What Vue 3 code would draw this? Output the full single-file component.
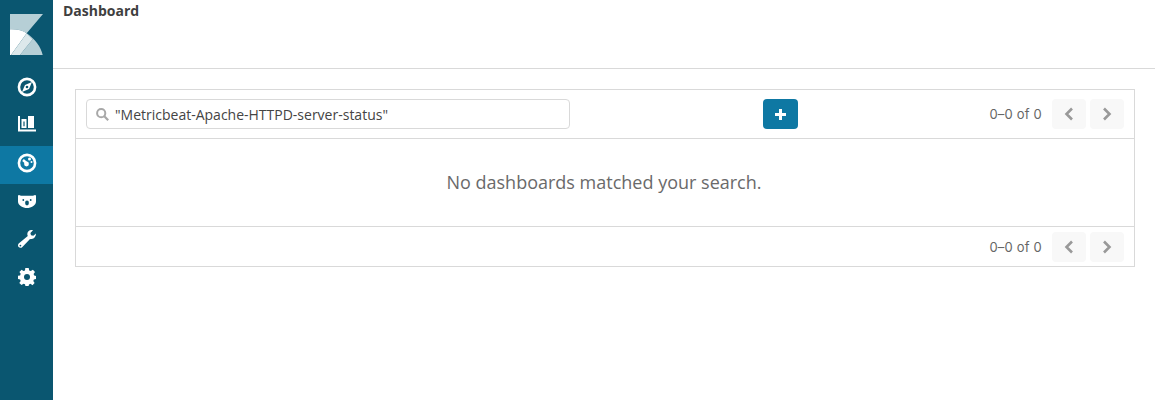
<script setup>
const navItems = [
  { name: "discover", active: false },
  { name: "visualize", active: false },
  { name: "dashboard", active: true },
  { name: "timelion", active: false },
  { name: "devtools", active: false },
  { name: "management", active: false },
];
</script>

<template>
  <div class="app">
    <nav class="sidebar">
      <div class="logo">
        <svg width="33" height="42" viewBox="0 0 33 42">
          <path d="M0 0H33L16.700 19.300C13 16.500 7 15 0 15.300Z" fill="#b6cfd6" />
          <path d="M0 15.300C7 15 13 16.500 16.700 19.300L1 41H0Z" fill="#fff" />
          <path d="M16.700 19.300C25 25 31 33 32.700 41H10L22.700 25.300Z" fill="#b6cfd6" />
          <path d="M16.700 19.300L22.700 25.300L10 41H1Z" fill="#dce8eb" />
        </svg>
      </div>
      <a v-for="item in navItems" :key="item.name" class="nav-item" :class="{ active: item.active }">
        <svg v-if="item.name === 'discover'" width="18" height="18" viewBox="0 0 18 18">
          <circle cx="9" cy="9" r="8.100" fill="none" stroke="#fff" stroke-width="2.600" />
          <path d="M14 4L11 11L4 14L7 7Z" fill="#fff" />
          <circle cx="9" cy="9" r="1.300" fill="#0a5670" />
        </svg>
        <svg v-else-if="item.name === 'visualize'" width="18" height="18" viewBox="0 0 18 18">
          <path d="M0 0H2V13.500H18V15.500H0Z" fill="#fff" />
          <path d="M3.500 3H8.500V12H3.500ZM5.400 5.500V10.300H6.600V5.500Z" fill="#fff" fill-rule="evenodd" />
          <rect x="10" y="0" width="6" height="12" fill="#fff" />
        </svg>
        <svg v-else-if="item.name === 'dashboard'" width="18" height="18" viewBox="0 0 18 18">
          <circle cx="9" cy="9" r="8.100" fill="none" stroke="#fff" stroke-width="2.600" />
          <path d="M5 6L9 9.500" stroke="#fff" stroke-width="2.400" />
          <circle cx="8.500" cy="10" r="2.400" fill="#fff" />
          <circle cx="11.500" cy="5" r="1.500" fill="#fff" />
          <circle cx="13.500" cy="8" r="1" fill="#fff" />
        </svg>
        <svg v-else-if="item.name === 'timelion'" width="18" height="18" viewBox="0 0 18 18">
          <path
            d="M0 4Q0 3 1 3L3 3.800H15L17 3Q18 3 18 4V9.500C18 13.500 13 16 9 16C5 16 0 13.500 0 9.500Z"
            fill="#fff"
          />
          <circle cx="5.300" cy="8" r="0.900" fill="#0a5670" />
          <circle cx="12.700" cy="8" r="0.900" fill="#0a5670" />
          <ellipse cx="9" cy="11" rx="1.900" ry="2.400" fill="#0a5670" />
        </svg>
        <svg v-else-if="item.name === 'devtools'" width="18" height="18" viewBox="0 0 18 18">
          <path
            d="M13.500 0C11 0 9.300 2 9.300 4C9.300 4.800 9.500 5.500 9.800 6L0.700 13.500C-0.300 14.600 -0.100 16.200 0.600 17C1.500 18 3.300 18.200 4.400 17L12 9C12.600 9.200 13 9.200 13.600 9.100C16.300 8.800 18 6.300 18 3.500L15.300 5.800L13 5.200L12.400 3L15 0.300C14.500 0.100 14 0 13.500 0Z"
            fill="#fff"
          />
          <circle cx="2.400" cy="15.600" r="0.900" fill="#0a5670" />
        </svg>
        <svg v-else width="18" height="18" viewBox="0 0 18 18">
          <path
            d="M7.300 0H10.700L11.200 2.400L12.800 3L14.900 1.700L17 4L15.600 6L16.200 7.500L18 8V11L15.900 11.500L15.300 13L16.600 15L14.500 17.200L12.500 15.800L11 16.400L10.600 18H7.400L7 16.300L5.500 15.700L3.500 17L1.300 14.900L2.700 13L2.100 11.400L0 11V7.800L2.100 7.400L2.700 5.800L1.400 3.900L3.600 1.700L5.500 3L7 2.400Z"
            fill="#fff"
          />
          <circle cx="9" cy="9" r="3" fill="#0a5670" />
        </svg>
      </a>
    </nav>

    <main class="main">
      <header class="topbar">
        <h1 class="title">Dashboard</h1>
      </header>

      <div class="content">
        <section class="panel">
          <div class="toolbar">
            <div class="search">
              <svg width="13" height="13" viewBox="0 0 13 13">
                <circle cx="5.200" cy="5.200" r="4.100" fill="none" stroke="#a8a8a8" stroke-width="2" />
                <path d="M8.300 8.300L12.200 12.200" stroke="#a8a8a8" stroke-width="2.200" />
              </svg>
              <span class="query">"Metricbeat-Apache-HTTPD-server-status"</span>
            </div>
            <div class="add-slot">
              <button class="add-btn">
                <svg width="11" height="11" viewBox="0 0 11 11">
                  <path d="M4 0H7V4H11V7H7V11H4V7H0V4H4Z" fill="#fff" />
                </svg>
              </button>
            </div>
            <div class="pager">
              <span class="count">0–0 of 0</span>
              <button class="page-btn">
                <svg width="10" height="14" viewBox="0 0 10 14">
                  <path d="M8 1.500L2.500 7L8 12.500" fill="none" stroke="#999" stroke-width="2.600" />
                </svg>
              </button>
              <button class="page-btn">
                <svg width="10" height="14" viewBox="0 0 10 14">
                  <path d="M2 1.500L7.500 7L2 12.500" fill="none" stroke="#999" stroke-width="2.600" />
                </svg>
              </button>
            </div>
          </div>

          <div class="empty">No dashboards matched your search.</div>

          <div class="footer">
            <div class="pager">
              <span class="count">0–0 of 0</span>
              <button class="page-btn">
                <svg width="10" height="14" viewBox="0 0 10 14">
                  <path d="M8 1.500L2.500 7L8 12.500" fill="none" stroke="#999" stroke-width="2.600" />
                </svg>
              </button>
              <button class="page-btn">
                <svg width="10" height="14" viewBox="0 0 10 14">
                  <path d="M2 1.500L7.500 7L2 12.500" fill="none" stroke="#999" stroke-width="2.600" />
                </svg>
              </button>
            </div>
          </div>
        </section>
      </div>
    </main>
  </div>
</template>

<style>
html,
body {
  margin: 0;
  background: #fff;
}
</style>

<style scoped>
* {
  box-sizing: border-box;
}

.app {
  display: flex;
  height: 400px;
  overflow: hidden;
  font-family: "Open Sans", sans-serif;
  color: #3f3f3f;
}

.sidebar {
  width: 53px;
  flex: none;
  background: #0a5670;
}

.logo {
  height: 70px;
  padding: 14px 0 0 10px;
}

.logo svg,
.nav-item svg,
.search svg,
.add-btn svg,
.page-btn svg {
  display: block;
}

.nav-item svg {
  overflow: visible;
}

.nav-item {
  display: flex;
  justify-content: center;
  height: 38px;
  padding-top: 8px;
}

.nav-item.active {
  background: #0e78a3;
}

.main {
  flex: 1;
  min-width: 0;
}

.topbar {
  height: 69px;
  padding-left: 10px;
  border-bottom: 1px solid #d9d9d9;
}

.title {
  margin: 0;
  font-size: 14px;
  font-weight: 700;
  line-height: 21px;
  color: #3f3f3f;
}

.content {
  padding: 20px 20px 0 22px;
}

.panel {
  border: 1px solid #d9d9d9;
}

.toolbar {
  display: flex;
  align-items: center;
  height: 49px;
  padding: 0 10px;
  border-bottom: 1px solid #d9d9d9;
}

.search {
  display: flex;
  align-items: center;
  gap: 6px;
  width: 484px;
  height: 30px;
  padding-left: 9px;
  border: 1px solid #d9d9d9;
  border-radius: 4px;
}

.query {
  font-size: 14px;
  color: #444;
}

.add-slot {
  margin-left: 193px;
}

.add-btn {
  display: flex;
  align-items: center;
  justify-content: center;
  width: 35px;
  height: 30px;
  padding: 0;
  border: 0;
  border-radius: 4px;
  background: #0e78a3;
}

.pager {
  display: flex;
  align-items: center;
  margin-left: auto;
}

.count {
  margin-right: 10px;
  font-family: Inter, "Open Sans", sans-serif;
  font-size: 13px;
  letter-spacing: 0.2px;
  color: #666;
}

.page-btn {
  display: flex;
  align-items: center;
  justify-content: center;
  width: 34px;
  height: 30px;
  padding: 0;
  border: 0;
  border-radius: 4px;
  background: #f8f8f8;
}

.page-btn + .page-btn {
  margin-left: 4px;
}

.empty {
  display: flex;
  align-items: center;
  justify-content: center;
  height: 87px;
  padding: 0 2px 1px 0;
  font-size: 18px;
  color: #6a6a6a;
}

.footer {
  display: flex;
  align-items: center;
  height: 40px;
  padding: 0 10px;
  border-top: 1px solid #d9d9d9;
}
</style>
